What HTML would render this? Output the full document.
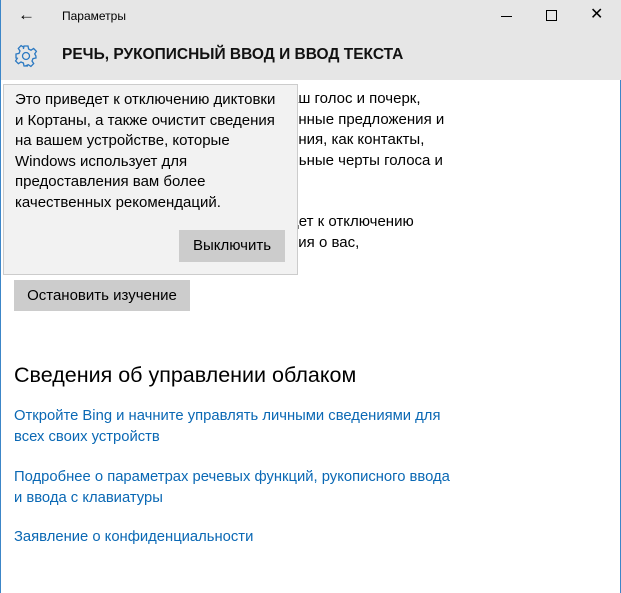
<html><head><style>
body{margin:0;width:621px;height:593px;overflow:hidden;background:#fff;font-family:"Liberation Sans",sans-serif;position:relative;border-left:1px solid #3c86c8;border-right:1px solid #3c86c8;box-sizing:border-box}
.a{position:absolute;white-space:nowrap}
.t{font-size:15px;color:#000}
.l{font-size:14.8px;color:#0a68b4}
</style></head><body>
<div class="a" style="left:0;top:0;width:621px;height:80px;background:#e6e6e6"></div>
<div class="a" style="left:17px;top:5px;font-size:17px">&#8592;</div>
<div class="a" style="left:61px;top:9px;font-size:12px">Параметры</div>
<div class="a" style="left:500px;top:16px;width:11px;height:1px;background:#000"></div>
<div class="a" style="left:545px;top:10px;width:9px;height:9px;border:1px solid #000"></div>
<div class="a" style="left:589px;top:4px;font-size:16px">&#10005;</div>
<svg class="a" style="left:13px;top:44px" width="24" height="24" viewBox="0 0 24 24"><g fill="none" stroke="#2b79c2" stroke-width="1.3"><circle cx="12" cy="12" r="3.5"/><path d="M10 2h4l.6 3 2.4 1.2 2.6-1.7 2.8 2.8-1.7 2.6L21.9 12v0l0 0L22 14l-3 .6-1 2.4 1.7 2.6-2.8 2.8-2.6-1.7-2.4 1L14 22h-4l-.6-3-2.4-1-2.6 1.7-2.8-2.8 1.7-2.6L2.3 14 2 14v-4l3-.6 1-2.4-1.7-2.6 2.8-2.8 2.6 1.7L9.4 5z"/></g></svg>
<div class="a" style="left:61px;top:46px;font-size:15.5px;font-weight:bold;color:#111">РЕЧЬ, РУКОПИСНЫЙ ВВОД И ВВОД ТЕКСТА</div>
<div class="a t" style="left:289px;top:89px;line-height:20.5px">аш голос и почерк,<br>енные предложения и<br>ения, как контакты,<br>льные черты голоса и</div>
<div class="a t" style="left:289px;top:212px;line-height:20.5px">дет к отключению<br>ния о вас,</div>
<div class="a" style="left:2px;top:84px;width:293px;height:189px;background:#f2f2f2;border:1px solid #ccc"></div>
<div class="a t" style="left:14px;top:90px;line-height:20.5px">Это приведет к отключению диктовки<br>и Кортаны, а также очистит сведения<br>на вашем устройстве, которые<br>Windows использует для<br>предоставления вам более<br>качественных рекомендаций.</div>
<div class="a t" style="left:178px;top:230px;width:106px;height:32px;background:#ccc;text-align:center;line-height:32px">Выключить</div>
<div class="a t" style="left:13px;top:280px;width:176px;height:31px;background:#ccc;text-align:center;line-height:31px">Остановить изучение</div>
<div class="a" style="left:13px;top:363px;font-size:21.5px;color:#000">Сведения об управлении облаком</div>
<div class="a l" style="left:13px;top:406px;line-height:21px">Откройте Bing и начните управлять личными сведениями для<br>всех своих устройств</div>
<div class="a l" style="left:13px;top:467px;line-height:21px">Подробнее о параметрах речевых функций, рукописного ввода<br>и ввода с клавиатуры</div>
<div class="a l" style="left:13px;top:527px;line-height:21px">Заявление о конфиденциальности</div>
</body></html>
